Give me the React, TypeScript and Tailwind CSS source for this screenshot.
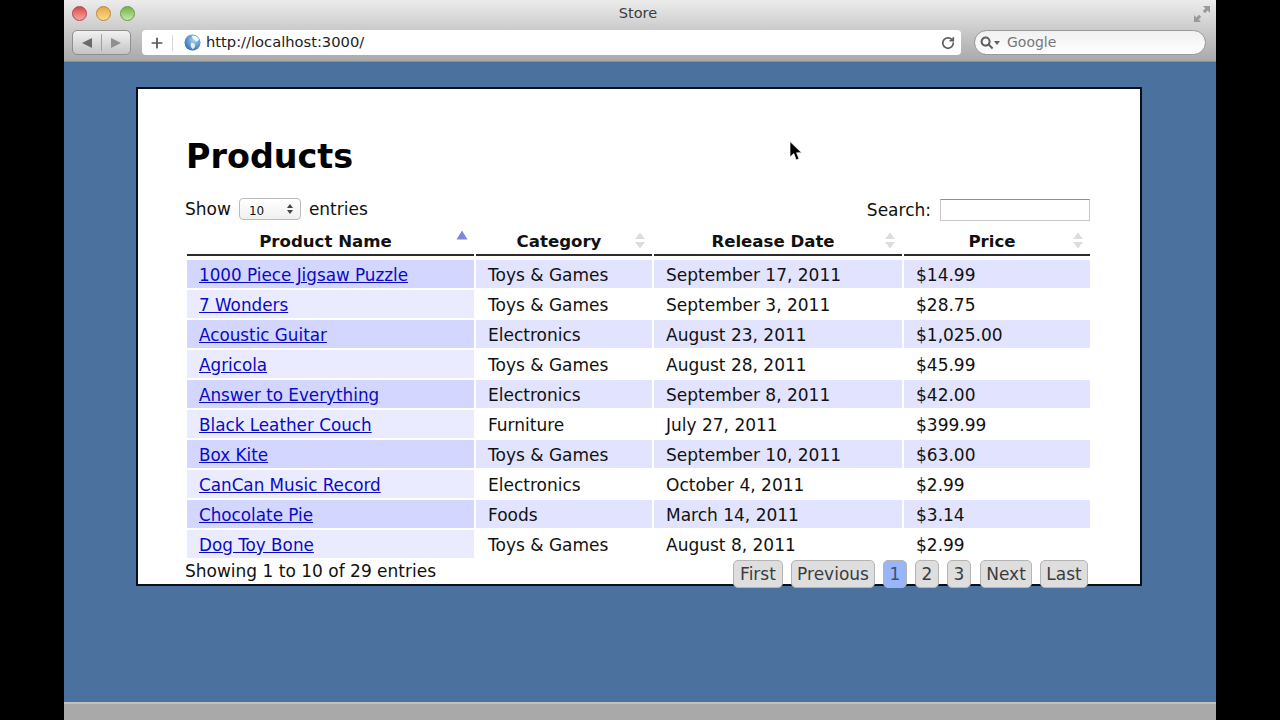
import { Plus, RotateCw } from "lucide-react";

type Product = { name: string; category: string; date: string; price: string };

const products: Product[] = [
  { name: "1000 Piece Jigsaw Puzzle", category: "Toys & Games", date: "September 17, 2011", price: "$14.99" },
  { name: "7 Wonders", category: "Toys & Games", date: "September 3, 2011", price: "$28.75" },
  { name: "Acoustic Guitar", category: "Electronics", date: "August 23, 2011", price: "$1,025.00" },
  { name: "Agricola", category: "Toys & Games", date: "August 28, 2011", price: "$45.99" },
  { name: "Answer to Everything", category: "Electronics", date: "September 8, 2011", price: "$42.00" },
  { name: "Black Leather Couch", category: "Furniture", date: "July 27, 2011", price: "$399.99" },
  { name: "Box Kite", category: "Toys & Games", date: "September 10, 2011", price: "$63.00" },
  { name: "CanCan Music Record", category: "Electronics", date: "October 4, 2011", price: "$2.99" },
  { name: "Chocolate Pie", category: "Foods", date: "March 14, 2011", price: "$3.14" },
  { name: "Dog Toy Bone", category: "Toys & Games", date: "August 8, 2011", price: "$2.99" },
];

function SortIcon({ active }: { active?: boolean }) {
  if (active) {
    return (
      <svg width="12" height="10" viewBox="0 0 12 10" className="absolute right-[6px] top-[6px]">
        <path d="M6 0.5 11.5 9.5H0.5Z" fill="#7f88d8" />
      </svg>
    );
  }
  return (
    <svg width="12" height="17" viewBox="0 0 12 17" className="absolute right-[6px] top-[8px]">
      <path d="M6 0.5 11 7H1Z" fill="#dcdcdc" />
      <path d="M6 16.5 11 10H1Z" fill="#dcdcdc" />
    </svg>
  );
}

function HeaderCell({ label, width, active }: { label: string; width: string; active?: boolean }) {
  return (
    <th className={`p-0 pb-[2px] ${width}`}>
      <div className="relative h-[32px] border-b-2 border-[#2b2b2b] pl-[10px] pr-5 pt-[6px] text-center text-[16.6px] font-bold leading-[24px]">
        {label}
        <SortIcon active={active} />
      </div>
    </th>
  );
}

function PageButton({ label, width, active }: { label: string; width: string; active?: boolean }) {
  return (
    <span
      className={`flex h-[28px] items-center justify-center rounded-[5px] border border-[#b4b4b4] text-[#3c3c3c] ${width} ${
        active ? "bg-[#9ab4f8] text-[#39507f]" : "bg-[#dedede]"
      }`}
    >
      {label}
    </span>
  );
}

function Cursor() {
  return (
    <svg width="14" height="21" viewBox="0 0 14 21" className="absolute left-[789px] top-[141px]">
      <path d="M1 0.5V16L4.8 12.6 7.2 19 10 17.8 7.6 11.8H12.6Z" fill="#000" stroke="#fff" strokeWidth="0.7" />
    </svg>
  );
}

function BrowserBar() {
  return (
    <div className="h-[62px] shrink-0 border-b border-[#8e8e8e] bg-gradient-to-b from-[#ececec] to-[#a9a9a9] font-['DejaVu_Sans',sans-serif]">
      <div className="grid h-[30px] grid-cols-[1fr_auto_1fr] items-center px-2 pb-[3px]">
        <div className="flex gap-[9px]">
          <span className="h-[15px] w-[15px] rounded-full border border-[#a84a4a] bg-gradient-to-b from-[#d9474c] to-[#f3a5a0]" />
          <span className="h-[15px] w-[15px] rounded-full border border-[#b58a3a] bg-gradient-to-b from-[#e8a63c] to-[#fbdc8e]" />
          <span className="h-[15px] w-[15px] rounded-full border border-[#6a9a48] bg-gradient-to-b from-[#72b24e] to-[#c8e8a0]" />
        </div>
        <span className="mr-[4px] text-[14.500px] text-[#3c3c3c]">Store</span>
        <svg width="20" height="20" viewBox="0 0 20 20" className="mr-[-4px] justify-self-end">
          <path d="M11 2h7v7l-2.400-2.400-2.600 2.600-2.200-2.200 2.600-2.600Z M9 18H2v-7l2.400 2.400 2.600-2.600 2.200 2.200-2.600 2.600Z" fill="#9a9a9a" />
        </svg>
      </div>
      <div className="flex h-[25px] items-center pl-2 pr-[10px]">
        <div className="flex h-[25px] w-[59px] items-center rounded-[5px] border border-[#8f8f8f] bg-gradient-to-b from-[#f2f2f2] to-[#c4c4c4]">
          <span className="flex flex-1 justify-center">
            <svg width="12" height="12" viewBox="0 0 12 12"><path d="M1 6 11 1V11Z" fill="#6a6a6a" /></svg>
          </span>
          <span className="h-[17px] w-px bg-[#a0a0a0]" />
          <span className="flex flex-1 justify-center">
            <svg width="12" height="12" viewBox="0 0 12 12"><path d="M11 6 1 1V11Z" fill="#8f8f8f" /></svg>
          </span>
        </div>
        <div className="ml-[11px] flex h-[25px] w-[819px] items-center rounded-[4px] bg-white pr-[6px]">
          <span className="flex w-[31px] justify-center border-r border-[#d8d8d8]">
            <Plus size={16} strokeWidth={2.6} className="text-[#555555]" />
          </span>
          <svg width="17" height="17" viewBox="0 0 17 17" className="ml-[11px]">
            <defs>
              <radialGradient id="globe" cx="0.6" cy="0.35" r="0.8">
                <stop offset="0" stopColor="#a9d4f5" />
                <stop offset="1" stopColor="#1f5fa8" />
              </radialGradient>
            </defs>
            <circle cx="8.500" cy="8.500" r="8" fill="url(#globe)" />
            <path d="M9 1.500c2.500 0 5 1.500 6 4-1 1.500-2.500 2.500-3.500 1.500S9.500 5 8.500 4 7.500 2 9 1.500Z" fill="#f4f8fc" />
            <path d="M7 9c2-.5 3.500.5 4 2s-1 3.500-2.500 4C7 13.500 6 11 7 9Z" fill="#e4eef8" />
          </svg>
          <span className="ml-[5px] flex-1 text-[14.700px] text-[#222222]">http://localhost:3000/</span>
          <RotateCw size={14} strokeWidth={3} className="text-[#5f5f5f]" />
        </div>
        <div className="ml-[13px] flex h-[25px] flex-1 items-center rounded-full border border-[#9a9a9a] bg-gradient-to-b from-[#f0f0f0] to-white pl-[5px]">
          <svg width="14" height="14" viewBox="0 0 15 15" fill="none" stroke="#606060" strokeWidth="2.200">
            <circle cx="6" cy="6" r="4.300" />
            <path d="M9.200 9.200 13.500 13.500" />
          </svg>
          <svg width="6" height="4" viewBox="0 0 6 4"><path d="M0 0H6L3 4Z" fill="#606060" /></svg>
          <span className="ml-[7px] text-[14px] text-[#777777]">Google</span>
        </div>
      </div>
    </div>
  );
}

function ProductsPanel() {
  return (
    <div className="ml-[72px] mt-[25px] flex h-[499px] w-[1006px] flex-col border-2 border-[#0b0f1a] bg-white pl-[47px] text-[17px] leading-[24px] text-[#111111] font-['DejaVu_Sans',sans-serif]">
      <h1 className="ml-[1px] mt-[45px] h-[42px] text-[33.400px] font-bold leading-[46px] text-black">Products</h1>
      <div className="mt-[20px] flex h-[28px] w-[907px] items-center justify-between pr-[2px]">
        <div className="flex items-center">
          Show
          <span className="relative mx-2">
            <select className="h-[22px] w-[62px] appearance-none rounded-[4px] border border-[#bbbbbb] bg-gradient-to-b from-white to-[#f0f0f0] pl-[9px] text-[12px]">
              <option>10</option>
            </select>
            <svg width="6" height="10" viewBox="0 0 6 10" className="pointer-events-none absolute right-[8px] top-[7px]">
              <path d="M3 0 6 4H0Z M3 10 0 6H6Z" fill="#444444" />
            </svg>
          </span>
          entries
        </div>
        <div className="flex items-center gap-[9px] pt-[2px]">
          Search:
          <input className="h-[22px] w-[150px] border border-[#c8c8c8] border-t-[#8f8f8f] bg-white" />
        </div>
      </div>
      <table className="w-[907px] table-fixed border-separate border-spacing-[2px]">
        <thead>
          <tr>
            <HeaderCell label="Product Name" width="w-[287px]" active />
            <HeaderCell label="Category" width="w-[176px]" />
            <HeaderCell label="Release Date" width="w-[248px]" />
            <HeaderCell label="Price" width="w-[186px]" />
          </tr>
        </thead>
        <tbody>
          {products.map((p, i) => {
            const odd = i % 2 === 0;
            const rest = odd ? "bg-[#e2e4ff]" : "bg-white";
            return (
              <tr key={p.name} className="h-[28px]">
                <td className={`p-0 pl-[12px] pt-[2px] ${odd ? "bg-[#d3d6ff]" : "bg-[#eaebff]"}`}>
                  <a href="#" className="text-[16.800px] text-[#0a0ac4] underline">{p.name}</a>
                </td>
                <td className={`p-0 pl-[12px] pt-[2px] ${rest}`}>{p.category}</td>
                <td className={`p-0 pl-[12px] pt-[2px] ${rest}`}>{p.date}</td>
                <td className={`p-0 pl-[12px] pt-[2px] ${rest}`}>{p.price}</td>
              </tr>
            );
          })}
        </tbody>
      </table>
      <div className="-mt-[2px] flex w-[903px] items-start justify-between">
        <span className="pt-[1px]">Showing 1 to 10 of 29 entries</span>
        <div className="mt-[2px] flex gap-2">
          <PageButton label="First" width="w-[50px]" />
          <PageButton label="Previous" width="w-[84px]" />
          <PageButton label="1" width="w-[24px]" active />
          <PageButton label="2" width="w-[24px]" />
          <PageButton label="3" width="w-[24px]" />
          <span className="ml-px">
            <PageButton label="Next" width="w-[52px]" />
          </span>
          <PageButton label="Last" width="w-[48px]" />
        </div>
      </div>
    </div>
  );
}

export default function App() {
  return (
    <div className="relative h-[720px] w-[1280px] overflow-hidden bg-black">
      <div className="ml-[64px] flex h-full w-[1152px] flex-col bg-[#4b719f]">
        <BrowserBar />
        <div className="flex-1">
          <ProductsPanel />
        </div>
        <div className="h-[18px] shrink-0 border-t-2 border-[#bfc2ba] bg-[#a9a9a9]" />
      </div>
      <Cursor />
    </div>
  );
}
